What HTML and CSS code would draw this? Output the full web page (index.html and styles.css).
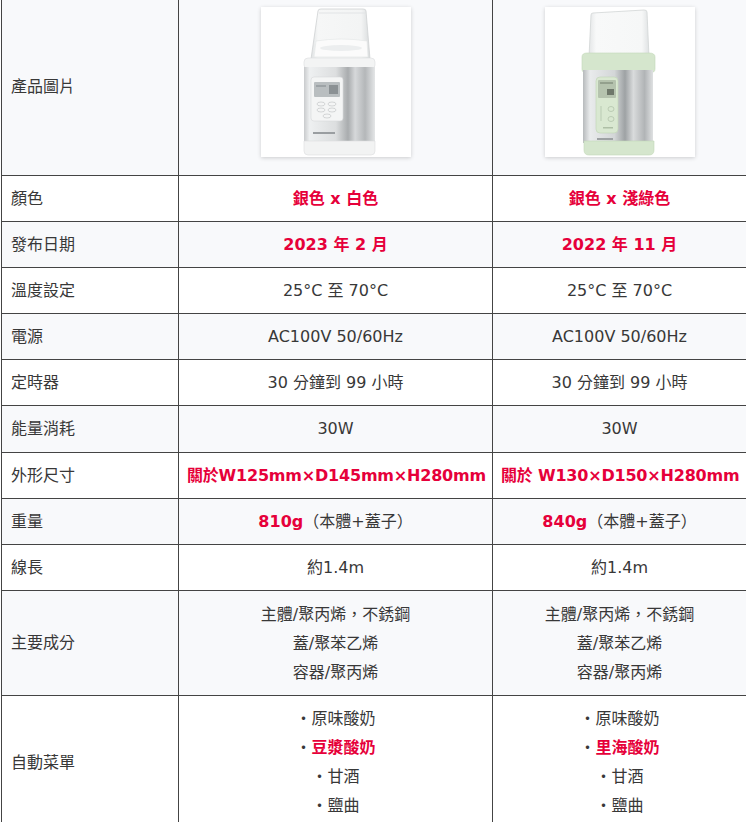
FILE: index.html
```html
<!DOCTYPE html>
<html lang="zh-Hant">
<head>
<meta charset="utf-8">
<link rel="stylesheet" href="styles.css">
</head>
<body>
<table class="spec">
  <colgroup>
    <col class="c-label">
    <col class="c-a">
    <col class="c-b">
  </colgroup>
  <tr class="alt first">
    <td class="label">產品圖片</td>
    <td class="pic-cell">
      <div class="pic">
        <svg viewBox="0 0 150 150" width="150" height="150">
          <defs>
            <linearGradient id="steelA" x1="0" x2="1" y1="0" y2="0">
              <stop offset="0" stop-color="#c9cbcd"/>
              <stop offset="0.08" stop-color="#eef0f1"/>
              <stop offset="0.45" stop-color="#dcdedf"/>
              <stop offset="0.62" stop-color="#a9acae"/>
              <stop offset="0.72" stop-color="#d6d8da"/>
              <stop offset="0.86" stop-color="#b4b7b9"/>
              <stop offset="1" stop-color="#e4e6e7"/>
            </linearGradient>
            <linearGradient id="lidA" x1="0" x2="1" y1="0" y2="0">
              <stop offset="0" stop-color="#dfe2e3"/>
              <stop offset="0.12" stop-color="#f6f7f7"/>
              <stop offset="0.85" stop-color="#f3f4f4"/>
              <stop offset="1" stop-color="#d8dbdc"/>
            </linearGradient>
          </defs>
          <rect width="150" height="150" fill="#fff"/>
          <path d="M57 4 Q57 2 60 2 L102 2 Q105 2 105 4 L109 52 L50 52 Z" fill="url(#lidA)" stroke="#cfd2d3" stroke-width="0.8"/>
          <path d="M58 6 L104 6" stroke="#e2e4e5" stroke-width="1.2"/>
          <path d="M55 34 Q80 30 106 34 L107 50 L53 50 Z" fill="#fbfbfb" stroke="#e3e5e6" stroke-width="0.6"/>
          <ellipse cx="80" cy="41" rx="21" ry="3" fill="#eceeef"/>
          <rect x="43" y="51" width="71" height="11" rx="4" fill="#f3f4f4" stroke="#dcdedf" stroke-width="0.6"/>
          <rect x="43" y="60" width="71" height="76" fill="url(#steelA)"/>
          <rect x="50" y="70" width="32" height="44" rx="3" fill="#f4f5f5" stroke="#d7d9da" stroke-width="0.6"/>
          <rect x="53" y="75" width="26" height="15" rx="1" fill="#b9bec0"/>
          <rect x="55" y="78" width="10" height="2" fill="#9da3a6"/>
          <rect x="68" y="78" width="9" height="9" fill="#8b9194"/>
          <ellipse cx="60" cy="97" rx="4" ry="2" fill="none" stroke="#c4c7c9" stroke-width="0.7"/>
          <ellipse cx="71" cy="97" rx="4" ry="2" fill="none" stroke="#c4c7c9" stroke-width="0.7"/>
          <ellipse cx="60" cy="103" rx="4" ry="2" fill="none" stroke="#c4c7c9" stroke-width="0.7"/>
          <ellipse cx="71" cy="103" rx="4" ry="2" fill="none" stroke="#c4c7c9" stroke-width="0.7"/>
          <ellipse cx="66" cy="109" rx="4" ry="2" fill="none" stroke="#c4c7c9" stroke-width="0.7"/>
          <rect x="52" y="125" width="22" height="2" fill="#9a9ea1"/>
          <path d="M43 134 L114 134 L114 144 Q114 148 110 148 L47 148 Q43 148 43 144 Z" fill="#f2f3f3" stroke="#dcdedf" stroke-width="0.6"/>
        </svg>
      </div>
    </td>
    <td class="pic-cell">
      <div class="pic">
        <svg viewBox="0 0 150 150" width="150" height="150">
          <defs>
            <linearGradient id="steelB" x1="0" x2="1" y1="0" y2="0">
              <stop offset="0" stop-color="#b7babc"/>
              <stop offset="0.1" stop-color="#e9ebec"/>
              <stop offset="0.45" stop-color="#d3d6d7"/>
              <stop offset="0.6" stop-color="#9ea2a4"/>
              <stop offset="0.72" stop-color="#d9dbdc"/>
              <stop offset="0.88" stop-color="#b1b4b6"/>
              <stop offset="1" stop-color="#dfe1e2"/>
            </linearGradient>
            <linearGradient id="lidB" x1="0" x2="1" y1="0" y2="0">
              <stop offset="0" stop-color="#e4e6e7"/>
              <stop offset="0.12" stop-color="#f8f9f9"/>
              <stop offset="0.88" stop-color="#f6f7f7"/>
              <stop offset="1" stop-color="#dfe2e3"/>
            </linearGradient>
          </defs>
          <rect width="150" height="150" fill="#fff"/>
          <path d="M46 8 Q46 6 48 6 L99 3 Q102 3 102 5 L104 50 L44 50 Z" fill="url(#lidB)" stroke="#d2d5d6" stroke-width="0.8"/>
          <path d="M37 50 Q37 46 42 46 L104 46 Q110 46 110 50 L110 62 Q110 66 104 66 L42 66 Q37 66 37 62 Z" fill="#d5e6cd" stroke="#c2d8b9" stroke-width="0.6"/>
          <rect x="38" y="63" width="70" height="73" fill="url(#steelB)"/>
          <rect x="51" y="70" width="22" height="56" rx="4" fill="#d9e8d1" stroke="#c0d4b6" stroke-width="0.6"/>
          <rect x="53" y="73" width="18" height="18" rx="1" fill="#b5c3ae"/>
          <rect x="55" y="75" width="13" height="2" fill="#93a08d"/>
          <rect x="62" y="82" width="7" height="6" fill="#6e786a"/>
          <ellipse cx="66" cy="102" rx="3" ry="2.5" fill="none" stroke="#aebfa6" stroke-width="0.7"/>
          <ellipse cx="66" cy="112" rx="3" ry="2.5" fill="none" stroke="#aebfa6" stroke-width="0.7"/>
          <path d="M56 99 L56 114" stroke="#aebfa6" stroke-width="0.7"/>
          <rect x="58" y="120" width="10" height="1.5" fill="#aebfa6"/>
          <rect x="52" y="131" width="16" height="2" fill="#9da1a3"/>
          <path d="M39 134 L109 134 L109 143 Q109 148 104 148 L44 148 Q39 148 39 143 Z" fill="#d5e6cd" stroke="#c2d8b9" stroke-width="0.6"/>
        </svg>
      </div>
    </td>
  </tr>
  <tr>
    <td class="label">顏色</td>
    <td><strong class="red">銀色 x 白色</strong></td>
    <td><strong class="red">銀色 x 淺綠色</strong></td>
  </tr>
  <tr class="alt">
    <td class="label">發布日期</td>
    <td><strong class="red">2023 年 2 月</strong></td>
    <td><strong class="red">2022 年 11 月</strong></td>
  </tr>
  <tr>
    <td class="label">溫度設定</td>
    <td>25°C 至 70°C</td>
    <td>25°C 至 70°C</td>
  </tr>
  <tr class="alt">
    <td class="label">電源</td>
    <td>AC100V 50/60Hz</td>
    <td>AC100V 50/60Hz</td>
  </tr>
  <tr>
    <td class="label">定時器</td>
    <td>30 分鐘到 99 小時</td>
    <td>30 分鐘到 99 小時</td>
  </tr>
  <tr class="alt">
    <td class="label">能量消耗</td>
    <td>30W</td>
    <td>30W</td>
  </tr>
  <tr>
    <td class="label">外形尺寸</td>
    <td class="nowrap"><strong class="red">關於W125mm×D145mm×H280mm</strong></td>
    <td class="nowrap"><strong class="red">關於 W130×D150×H280mm</strong></td>
  </tr>
  <tr class="alt">
    <td class="label">重量</td>
    <td><strong class="red">810g</strong>（本體+蓋子）</td>
    <td><strong class="red">840g</strong>（本體+蓋子）</td>
  </tr>
  <tr>
    <td class="label">線長</td>
    <td>約1.4m</td>
    <td>約1.4m</td>
  </tr>
  <tr class="alt">
    <td class="label">主要成分</td>
    <td>主體/聚丙烯<span class="comma">，</span>不銹鋼<br>蓋/聚苯乙烯<br>容器/聚丙烯</td>
    <td>主體/聚丙烯<span class="comma">，</span>不銹鋼<br>蓋/聚苯乙烯<br>容器/聚丙烯</td>
  </tr>
  <tr>
    <td class="label">自動菜單</td>
    <td>・原味酸奶<br>・<strong class="red">豆漿酸奶</strong><br>・甘酒<br>・鹽曲</td>
    <td>・原味酸奶<br>・<strong class="red">里海酸奶</strong><br>・甘酒<br>・鹽曲</td>
  </tr>
</table>
</body>
</html>
```

FILE: styles.css
```css
html, body {
  margin: 0;
  padding: 0;
  background: #ffffff;
}

body {
  font-family: "DejaVu Sans", "Noto Sans CJK TC", sans-serif;
  font-size: 16px;
  color: #383838;
}

.spec {
  border-collapse: collapse;
  table-layout: fixed;
  width: 745px;
  margin-left: 1px;
}

.c-label { width: 177px; }
.c-a { width: 314px; }
.c-b { width: 254px; }

.spec td {
  border: 1px solid #444444;
  padding: 8px 8px;
  line-height: 29.1px;
  text-align: center;
  vertical-align: middle;
}

.spec td.label {
  text-align: left;
  padding-left: 9px;
}

.spec tr.first td {
  border-top: 0;
  padding-top: 7px;
}

.spec td.pic-cell {
  padding-bottom: 18px;
}

.spec tr.alt td {
  background: #f8f9fb;
}

.pic {
  width: 150px;
  height: 150px;
  margin: 0 auto;
  background: #fff;
  box-shadow: 0 1px 4px rgba(0, 0, 0, 0.18);
}

.pic svg {
  display: block;
}

.comma {
  font-family: "Noto Sans CJK SC", sans-serif;
}

.red {
  color: #e6003a;
  font-weight: bold;
}

.nowrap {
  white-space: nowrap;
}

.nowrap .red {
  letter-spacing: -0.2px;
}
```
